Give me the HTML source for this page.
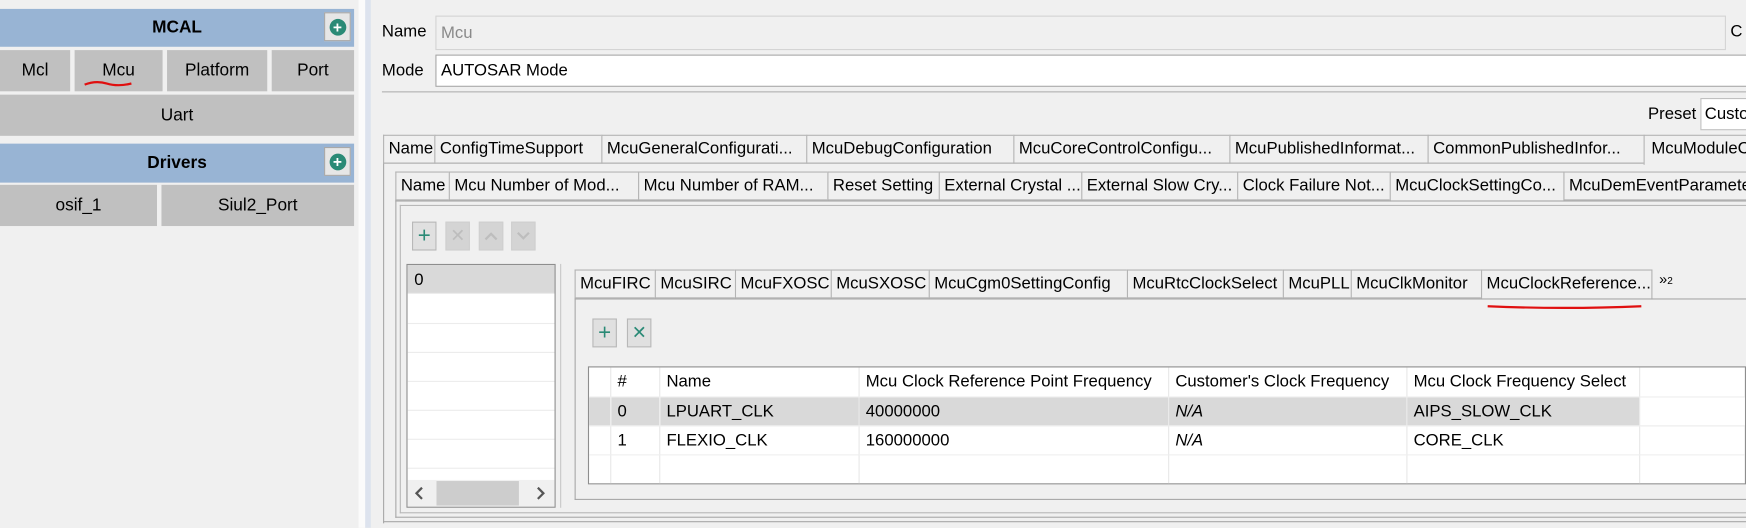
<!DOCTYPE html>
<html><head><meta charset="utf-8"><style>
html,body{margin:0;padding:0;width:1746px;height:527px;overflow:hidden;background:#f0f0f0}
#w{position:absolute;left:0;top:0;width:1568px;height:474px;transform:scale(1.11352);transform-origin:0 0;font-family:"Liberation Sans",sans-serif;font-size:15px;color:#000;background:#f0f0f0}
.a{position:absolute;box-sizing:border-box}
.btn{background:#c0c0c0;display:flex;align-items:center;justify-content:center;font-size:15.5px}
.hdr{background:#98b4d4;display:flex;align-items:center;justify-content:center;font-weight:bold;font-size:15.5px}
.plus{width:24px;height:26px;border:1px solid #a8a8a8;background:#e6e6e6;display:flex;align-items:center;justify-content:center}
.plus span{width:15px;height:15px;border-radius:50%;background:#2a8a76;color:#fff;font-weight:bold;font-size:14px;line-height:15px;text-align:center}
.tabs{display:flex;position:absolute}
.tabs div{box-sizing:border-box;border:1px solid #b4b4b4;border-right:none;height:26px;line-height:24px;padding-left:4px;white-space:nowrap;overflow:hidden;background:#f0f0f0}
.tabs div.s{border-bottom:none;height:27px;border-right:1px solid #b4b4b4}
.ib{width:22px;height:26px;border:1px solid #b8b8b8;background:#e0e0e0;display:flex;align-items:center;justify-content:center;color:#2a8a76;font-size:20px}
.ib.d{background:#d4d4d4;color:#bdbdbd;border-color:#cfcfcf}
.row{position:absolute;left:0;right:0;border-bottom:1px solid #ececec}
table{border-collapse:collapse;table-layout:fixed;width:1100px}
td{box-sizing:border-box;padding:0 0 0 6px;height:26px;border-right:1px solid #e8e8e8;border-bottom:1px solid #eeeeee;white-space:nowrap;overflow:hidden}
</style></head><body><div id="w">
<div class="a" style="left:322px;top:0;width:6px;height:474px;background:#fbfbfb"></div>
<div class="a" style="left:328px;top:0;width:5px;height:474px;background:#dde3ee"></div>
<div class="a hdr" style="left:0;top:8px;width:318px;height:34px">MCAL</div>
<div class="a plus" style="left:291px;top:11px"><span>+</span></div>
<div class="a btn" style="left:0;top:45px;width:63px;height:37px">Mcl</div>
<div class="a btn" style="left:67px;top:45px;width:79px;height:37px">Mcu</div>
<svg class="a" style="left:74px;top:70px" width="48" height="10"><path d="M2 6 Q12 2 22 5 T44 5" stroke="#e01010" stroke-width="2" fill="none"/></svg>
<div class="a btn" style="left:150px;top:45px;width:90px;height:37px">Platform</div>
<div class="a btn" style="left:244px;top:45px;width:74px;height:37px">Port</div>
<div class="a btn" style="left:0;top:85px;width:318px;height:37px">Uart</div>
<div class="a hdr" style="left:0;top:129px;width:318px;height:35px">Drivers</div>
<div class="a plus" style="left:291px;top:132px"><span>+</span></div>
<div class="a btn" style="left:0;top:166px;width:141px;height:37px">osif_1</div>
<div class="a btn" style="left:145px;top:166px;width:173px;height:37px">Siul2_Port</div>

<div class="a" style="left:343px;top:20px">Name</div>
<div class="a" style="left:391px;top:14px;width:1159px;height:31px;border:1px solid #d4d4d4;color:#8a8a8a;padding:6px 4px">Mcu</div>
<div class="a" style="left:1554px;top:20px">C</div>
<div class="a" style="left:343px;top:55px">Mode</div>
<div class="a" style="left:391px;top:49px;width:1180px;height:29px;border:1px solid #a8a8a8;background:#fff;padding:5px 4px">AUTOSAR Mode</div>
<div class="a" style="left:343px;top:82px;width:1225px;height:1px;background:#b0b0b0"></div>
<div class="a" style="left:1480px;top:94px">Preset</div>
<div class="a" style="left:1527px;top:88px;width:50px;height:29px;border:1px solid #c0c0c0;background:#fff;padding:5px 3px;overflow:hidden">Custom</div>

<div class="tabs" style="left:344px;top:121px">
<div style="width:46px">Name</div><div style="width:150px">ConfigTimeSupport</div><div style="width:184px">McuGeneralConfigurati...</div><div style="width:186px">McuDebugConfiguration</div><div style="width:194px">McuCoreControlConfigu...</div><div style="width:178px">McuPublishedInformat...</div><div style="width:194px">CommonPublishedInfor...</div><div class="s" style="width:100px;padding-left:6px;border-right:none">McuModuleConfiguration</div>
</div>
<div class="a" style="left:344px;top:146px;width:1230px;height:324px;border:1px solid #a8a8a8;border-bottom:none;border-top:none"></div>
<div class="a" style="left:344px;top:146px;width:1132px;height:1px;background:#b4b4b4"></div>
<div class="a" style="left:344px;top:468px;width:1230px;height:1px;background:#a8a8a8"></div>

<div class="tabs" style="left:355px;top:154px">
<div style="width:48px">Name</div><div style="width:170px">Mcu Number of Mod...</div><div style="width:170px">Mcu Number of RAM...</div><div style="width:100px">Reset Setting</div><div style="width:128px">External Crystal ...</div><div style="width:140px">External Slow Cry...</div><div style="width:137px">Clock Failure Not...</div><div class="s" style="width:157px">McuClockSettingCo...</div><div style="width:170px;border-left:none">McuDemEventParameterRefs</div>
</div>
<div class="a" style="left:355px;top:180px;width:1220px;height:285px;border:1px solid #a8a8a8;border-right:none"></div>
<div class="a" style="left:359px;top:184px;width:1210px;height:277px;border:1px solid #b8b8b8;border-right:none"></div>

<div class="a ib" style="left:370px;top:199px">+</div>
<div class="a ib d" style="left:400px;top:199px;font-size:16px">✕</div>
<div class="a ib d" style="left:430px;top:199px"><svg width="12" height="8"><path d="M1 7 L6 2 L11 7" stroke="#bdbdbd" stroke-width="2" fill="none"/></svg></div>
<div class="a ib d" style="left:459px;top:199px"><svg width="12" height="8"><path d="M1 1 L6 6 L11 1" stroke="#bdbdbd" stroke-width="2" fill="none"/></svg></div>

<div class="a" style="left:365px;top:237px;width:134px;height:219px;border:1px solid #8e8e8e;background:#fff;overflow:hidden">
<div class="row" style="top:0;height:26px;background:#d9d9d9;padding:5px 6px;box-sizing:border-box">0</div>
<div class="row" style="top:26px;height:26px"></div><div class="row" style="top:52px;height:26px"></div><div class="row" style="top:78px;height:26px"></div><div class="row" style="top:104px;height:26px"></div><div class="row" style="top:130px;height:26px"></div><div class="row" style="top:156px;height:26px"></div>
<div class="a" style="left:0;top:193px;width:134px;height:24px;background:#f0f0f0"></div>
<div class="a" style="left:26px;top:194px;width:74px;height:22px;background:#cdcdcd"></div>
<svg class="a" style="left:6px;top:199px" width="10" height="12"><path d="M7 1 L2 6 L7 11" stroke="#555" stroke-width="2" fill="none"/></svg>
<svg class="a" style="left:114px;top:199px" width="10" height="12"><path d="M3 1 L8 6 L3 11" stroke="#555" stroke-width="2" fill="none"/></svg>
</div>
<div class="a" style="left:503px;top:237px;width:1px;height:219px;background:#c8c8c8"></div>

<div class="tabs" style="left:516px;top:242px">
<div style="width:72px">McuFIRC</div><div style="width:72px">McuSIRC</div><div style="width:86px">McuFXOSC</div><div style="width:88px">McuSXOSC</div><div style="width:178px">McuCgm0SettingConfig</div><div style="width:140px">McuRtcClockSelect</div><div style="width:61px">McuPLL</div><div style="width:117px">McuClkMonitor</div><div class="s" style="width:154px">McuClockReference...</div>
</div>
<div class="a" style="left:1490px;top:243px;font-size:13px">»<span style="font-size:9px">2</span></div>
<svg class="a" style="left:1334px;top:272px" width="142" height="8"><path d="M2 3 Q70 6 140 3" stroke="#e01010" stroke-width="2" fill="none"/></svg>
<div class="a" style="left:516px;top:268px;width:1060px;height:181px;border:1px solid #a8a8a8;border-right:none"></div>

<div class="a ib" style="left:532px;top:286px">+</div>
<div class="a ib" style="left:563px;top:286px;font-size:16px">✕</div>

<div class="a" style="left:528px;top:329px;width:1040px;height:106px;border:1px solid #8e8e8e;background:#fff;overflow:hidden">
<table>
<colgroup><col style="width:19px"><col style="width:44px"><col style="width:179px"><col style="width:278px"><col style="width:214px"><col style="width:209px"><col></colgroup>
<tr><td></td><td>#</td><td>Name</td><td>Mcu Clock Reference Point Frequency</td><td>Customer's Clock Frequency</td><td>Mcu Clock Frequency Select</td><td style="border-right:none"></td></tr>
<tr style="background:#d9d9d9"><td></td><td>0</td><td>LPUART_CLK</td><td>40000000</td><td><i>N/A</i></td><td>AIPS_SLOW_CLK</td><td style="background:#fff;border-right:none"></td></tr>
<tr><td></td><td>1</td><td>FLEXIO_CLK</td><td>160000000</td><td><i>N/A</i></td><td>CORE_CLK</td><td style="border-right:none"></td></tr>
<tr><td></td><td></td><td></td><td></td><td></td><td></td><td style="border-right:none"></td></tr>
</table>
</div>
</div></body></html>
